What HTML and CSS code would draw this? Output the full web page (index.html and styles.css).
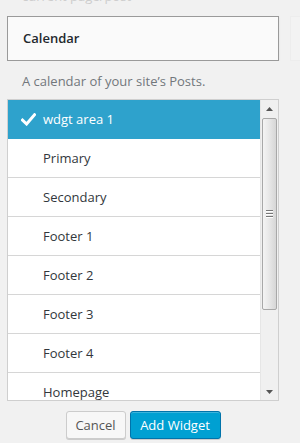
FILE: index.html
```html
<!DOCTYPE html>
<html>
<head>
<meta charset="utf-8">
<link rel="stylesheet" href="styles.css">
</head>
<body>
<div class="page">
  <div class="prev-desc">current page/post</div>
  <div class="widgets-row">
    <div class="widget-title">Calendar</div>
    <div class="widget-ghost"></div>
  </div>
  <div class="widget-desc">A calendar of your site’s Posts.</div>
  <div class="chooser">
    <ul class="area-list">
      <li class="area selected">
        <svg class="check" width="15" height="13" viewBox="0 0 15 13"><path d="M1.5 7.2 L5.6 11 L13.5 1.8" fill="none" stroke="#fff" stroke-width="3" stroke-linecap="square"/></svg>
        <span>wdgt area 1</span>
      </li>
      <li class="area"><span>Primary</span></li>
      <li class="area"><span>Secondary</span></li>
      <li class="area"><span>Footer 1</span></li>
      <li class="area"><span>Footer 2</span></li>
      <li class="area"><span>Footer 3</span></li>
      <li class="area"><span>Footer 4</span></li>
      <li class="area"><span>Homepage</span></li>
    </ul>
    <div class="scrollbar">
      <div class="sb-btn"><svg width="7" height="4" viewBox="0 0 7 4"><path d="M3.5 0 L7 4 L0 4 Z" fill="#555"/></svg></div>
      <div class="sb-track">
        <div class="sb-thumb">
          <div class="grip"><i></i><i></i><i></i></div>
        </div>
      </div>
      <div class="sb-btn"><svg width="7" height="4" viewBox="0 0 7 4"><path d="M0 0 L7 0 L3.5 4 Z" fill="#555"/></svg></div>
    </div>
  </div>
  <div class="actions">
    <button class="btn cancel">Cancel</button>
    <button class="btn primary">Add Widget</button>
  </div>
</div>
</body>
</html>
```
FILE: styles.css
```css
html, body {
  margin: 0;
  padding: 0;
  background: #f1f1f1;
  overflow: hidden;
}
body {
  font-family: "Open Sans", "Liberation Sans", sans-serif;
  font-size: 13px;
  width: 300px;
  height: 443px;
}
.page {
  padding-left: 7px;
  width: 272px;
}
.prev-desc {
  height: 16px;
  line-height: 16px;
  margin-top: -12px;
  padding-left: 15px;
  color: #cdcdcd;
  font-size: 13px;
  white-space: nowrap;
}
.widgets-row {
  display: flex;
  gap: 11px;
  margin-top: 12px;
  width: 293px;
  overflow: hidden;
}
.widget-title {
  flex: 0 0 auto;
  box-sizing: border-box;
  width: 272px;
  height: 45px;
  border: 1px solid #9a9a9a;
  background: #fafafa;
  padding-left: 15px;
  line-height: 43px;
  font-weight: 600;
  font-size: 13px;
  color: #23282d;
  box-shadow: 0 1px 2px rgba(0,0,0,0.07);
}
.widget-ghost {
  flex: 0 0 auto;
  box-sizing: border-box;
  width: 60px;
  height: 45px;
  border: 1px solid #ededed;
  background: #f3f3f3;
}
.widget-desc {
  padding-left: 15px;
  margin-top: 10px;
  height: 28px;
  line-height: 20px;
  color: #72777c;
  font-size: 13px;
}
.chooser {
  box-sizing: border-box;
  width: 272px;
  height: 302px;
  border: 1px solid #cfcfcf;
  background: #fff;
  display: flex;
  overflow: hidden;
}
.area-list {
  list-style: none;
  margin: 0;
  padding: 0;
  flex: 1 1 auto;
  overflow: hidden;
}
.area {
  height: 38px;
  border-bottom: 1px solid #d6d6d6;
  display: flex;
  align-items: center;
  padding-left: 35px;
  color: #32373c;
  font-size: 13px;
  position: relative;
}
.area.selected {
  background: #2ea2cc;
  color: #fff;
  border-bottom-color: #2ea2cc;
}
.check {
  position: absolute;
  left: 13px;
  top: 13px;
}
.scrollbar {
  flex: 0 0 17px;
  display: flex;
  flex-direction: column;
  background: #f0f0f0;
  border-left: 1px solid #e6e6e6;
}
.sb-btn {
  height: 17px;
  display: flex;
  align-items: center;
  justify-content: center;
}
.sb-track {
  flex: 1 1 auto;
  padding: 1px 1px 0 1px;
}
.sb-thumb {
  box-sizing: border-box;
  height: 192px;
  border: 1px solid #a8a8a8;
  border-radius: 2px;
  background: linear-gradient(to right, #f4f4f4 0%, #e8e8e8 45%, #d6d6d6 100%);
  display: flex;
  align-items: center;
  justify-content: center;
}
.grip {
  display: flex;
  flex-direction: column;
  gap: 1px;
}
.grip i {
  display: block;
  width: 7px;
  height: 1px;
  background: #777;
  border-bottom: 1px solid #fff;
}
.actions {
  display: flex;
  justify-content: center;
  gap: 4px;
  margin-top: 10px;
}
.btn {
  box-sizing: border-box;
  height: 28px;
  border-radius: 3px;
  font-family: "Open Sans", "Liberation Sans", sans-serif;
  font-size: 13px;
  padding: 0;
  line-height: 26px;
  white-space: nowrap;
  text-align: center;
  cursor: pointer;
}
.cancel {
  width: 60px;
  background: #f7f7f7;
  border: 1px solid #cccccc;
  color: #555;
  box-shadow: 0 1px 0 #cccccc;
}
.primary {
  width: 91px;
  background: #00a0d2;
  border: 1px solid #0073aa;
  color: #fff;
  box-shadow: inset 0 1px 0 rgba(120,200,230,0.5), 0 1px 0 rgba(0,0,0,0.15);
}
```
